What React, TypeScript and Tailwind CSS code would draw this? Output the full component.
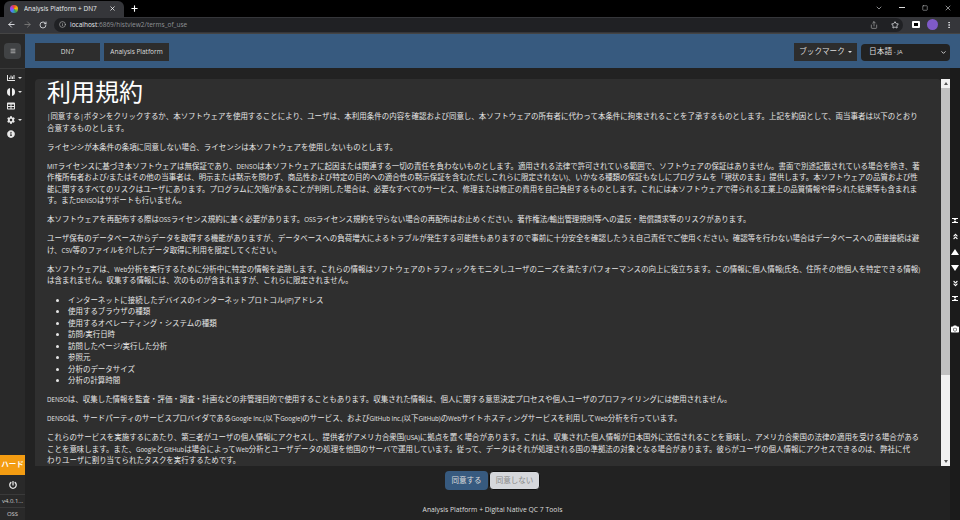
import {
  ArrowLeft,
  ArrowRight,
  ChevronDown,
  Info,
  Menu,
  MoreVertical,
  Plus,
  RotateCw,
  Share,
  Square,
  Star,
  X,
} from 'lucide-react'
import {
  FaAngleDoubleDown,
  FaAngleDoubleUp,
  FaCamera,
  FaChartBar,
  FaCog,
  FaInfoCircle,
  FaPowerOff,
  FaTable,
} from 'react-icons/fa'

const CJK = "font-['Open_Sans','Noto_Sans_CJK_JP',sans-serif]"

const INTRO = [
  '|同意する|ボタンをクリックするか、本ソフトウェアを使用することにより、ユーザは、本利用条件の内容を確認および同意し、本ソフトウェアの所有者に代わって本条件に拘束されることを了承するものとします。上記を約因として、両当事者は以下のとおり\n合意するものとします。',
  'ライセンシが本条件の条項に同意しない場合、ライセンシは本ソフトウェアを使用しないものとします。',
  'MITライセンスに基づき本ソフトウェアは無保証であり、DENSOは本ソフトウェアに起因または関連する一切の責任を負わないものとします。適用される法律で許可されている範囲で、ソフトウェアの保証はありません。書面で別途記載されている場合を除き、著\n作権所有者および/またはその他の当事者は、明示または黙示を問わず、商品性および特定の目的への適合性の黙示保証を含む(ただしこれらに限定されない)、いかなる種類の保証もなしにプログラムを「現状のまま」提供します。本ソフトウェアの品質および性\n能に関するすべてのリスクはユーザにあります。プログラムに欠陥があることが判明した場合は、必要なすべてのサービス、修理または修正の費用を自己負担するものとします。これには本ソフトウェアで得られる工業上の品質情報や得られた結果等も含まれま\nす。またDENSOはサポートも行いません。',
  '本ソフトウェアを再配布する際はOSSライセンス規約に基く必要があります。OSSライセンス規約を守らない場合の再配布はお止めください。著作権法/輸出管理規則等への違反・賠償請求等のリスクがあります。',
  'ユーザ保有のデータベースからデータを取得する機能がありますが、データベースへの負荷増大によるトラブルが発生する可能性もありますので事前に十分安全を確認したうえ自己責任でご使用ください。確認等を行わない場合はデータベースへの直接接続は避\nけ、CSV等のファイルを介したデータ取得に利用を限定してください。',
  '本ソフトウェアは、Web分析を実行するために分析中に特定の情報を追跡します。これらの情報はソフトウェアのトラフィックをモニタしユーザのニーズを満たすパフォーマンスの向上に役立ちます。この情報に個人情報(氏名、住所その他個人を特定できる情報)\nは含まれません。収集する情報には、次のものが含まれますが、これらに限定されません。',
]

const LIST_ITEMS = [
  'インターネットに接続したデバイスのインターネットプロトコル(IP)アドレス',
  '使用するブラウザの種類',
  '使用するオペレーティング・システムの種類',
  '訪問/実行日時',
  '訪問したページ/実行した分析',
  '参照元',
  '分析のデータサイズ',
  '分析の計算時間',
]

const OUTRO = [
  'DENSOは、収集した情報を監査・評価・調査・計画などの非管理目的で使用することもあります。収集された情報は、個人に関する意思決定プロセスや個人ユーザのプロファイリングには使用されません。',
  'DENSOは、サードパーティのサービスプロバイダであるGoogle Inc.(以下Google)のサービス、およびGitHub Inc.(以下GitHub)のWebサイトホスティングサービスを利用してWeb分析を行っています。',
  'これらのサービスを実施するにあたり、第三者がユーザの個人情報にアクセスし、提供者がアメリカ合衆国(USA)に拠点を置く場合があります。これは、収集された個人情報が日本国外に送信されることを意味し、アメリカ合衆国の法律の適用を受ける場合がある\nことを意味します。また、GoogleとGitHubは場合によってWeb分析とユーザデータの処理を他国のサーバで運用しています。従って、データはそれが処理される国の準拠法の対象となる場合があります。彼らがユーザの個人情報にアクセスできるのは、弊社に代\nわりユーザに割り当てられたタスクを実行するためです。',
]

// latin runs are visibly smaller than the kana in the original font mix
function MixedText({ text }: { text: string }) {
  return (
    <>
      {text.split(/([\x20-\x7e]+)/).map((part, i) =>
        i % 2 === 1 ? (
          <span key={i} className="text-[6.2px]">
            {part}
          </span>
        ) : (
          part
        ),
      )}
    </>
  )
}

function BrowserChrome() {
  return (
    <div className="flex h-[34px] shrink-0 flex-col border-b border-[#444] bg-[#35363a]">
      <div className="flex h-[17px] items-end bg-black pl-1 text-white">
        <div className="flex h-[16px] w-[120px] items-center gap-1.5 rounded-t-md bg-[#35363a] pl-[6px] pr-2 text-[6.5px]">
          <span className="h-2 w-2 shrink-0 rounded-full bg-[conic-gradient(#ea4335,#fbbc05,#34a853,#4285f4,#a142f4,#ea4335)]" />
          <span className="flex-1 truncate text-[#e8eaed]">Analysis Platform + DN7</span>
          <X size={7} strokeWidth={2.5} />
        </div>
        <Plus size={9} strokeWidth={3} className="mb-1 ml-[6px]" />
        <div className="mb-[5px] ml-auto flex items-center gap-[16.5px] pr-[8px] text-[#cfd0d2]">
          <ChevronDown size={8} />
          <span className="h-px w-[6px] bg-[#ddd]" />
          <Square size={6} strokeWidth={2} />
          <X size={8} />
        </div>
      </div>
      <div className="flex h-[17px] items-center gap-[7px] pl-[7px] pr-[7px] text-[#dfe1e5]">
        <ArrowLeft size={9} strokeWidth={2.5} />
        <ArrowRight size={9} strokeWidth={2.5} className="text-[#777]" />
        <RotateCw size={8} strokeWidth={2.5} />
        <div className="flex h-[14px] flex-1 items-center gap-1 rounded-full bg-[#202124] pl-[5px] pr-[4px] text-[6.5px]">
          <Info size={7} className="text-[#bbb]" />
          <span>
            <span className="text-[#e8eaed]">localhost</span>
            <span className="text-[#8f9296]">:6869/histview2/terms_of_use</span>
          </span>
          <Share size={8} className="ml-auto text-[#aaa]" />
          <Star size={8} strokeWidth={2.5} className="ml-[9px]" />
        </div>
        <span className="ml-[2px] h-[7px] w-[8px] rounded-[1px] border-2 border-white bg-black" />
        <span className="h-[11px] w-[11px] rounded-full bg-[#7f5ac8]" />
        <MoreVertical size={8} strokeWidth={3} />
      </div>
    </div>
  )
}

function NavIcon({ caret, children }: { caret?: boolean; children: React.ReactNode }) {
  return (
    <div className="flex h-[8px] items-center gap-[3px]">
      {children}
      {caret && <span className="h-0 w-0 border-x-[2px] border-t-[2px] border-x-transparent border-t-[#ddd]" />}
    </div>
  )
}

function Sidebar() {
  return (
    <aside className="flex w-[25px] shrink-0 flex-col items-center bg-[#292929] text-[#e8e8e8]">
      <div className="flex h-[35px] w-full items-center justify-center border-b border-[#3a3a3a]">
        <button
          type="button"
          className="flex h-4 w-[17px] items-center justify-center rounded-sm bg-[#414345] text-[#c8c8c8]"
        >
          <Menu size={6} strokeWidth={3} />
        </button>
      </div>
      <nav className="flex w-full flex-col items-start gap-[6px] pl-[7px] pt-[5px]">
        <NavIcon caret>
          <FaChartBar size={8} />
        </NavIcon>
        <NavIcon caret>
          <span className="h-2 w-2 rounded-full bg-[linear-gradient(90deg,#eee_42%,#292929_42%,#292929_58%,#eee_58%)]" />
        </NavIcon>
        <NavIcon>
          <FaTable size={8} />
        </NavIcon>
        <NavIcon caret>
          <FaCog size={8} />
        </NavIcon>
        <NavIcon>
          <FaInfoCircle size={8} />
        </NavIcon>
      </nav>
      <div
        className={`${CJK} mt-auto flex h-[20px] w-full items-center justify-center overflow-hidden bg-[#f39c12] text-[7.5px] font-bold whitespace-nowrap text-white`}
      >
        ハード
      </div>
      <div className="flex h-[20px] w-full items-center justify-center border-b border-[#3a3a3a]">
        <FaPowerOff size={8} />
      </div>
      <div className="flex h-[13px] w-full items-center justify-center border-b border-[#3a3a3a] text-[6px] whitespace-nowrap text-[#ccc]">
        v4.0.1...
      </div>
      <div className="flex h-[12px] w-full items-center justify-center text-[6px] text-[#ccc]">OSS</div>
    </aside>
  )
}

function Header() {
  return (
    <header className="flex h-[34px] shrink-0 items-center justify-between bg-[#375a7f] px-[10px] pt-[2px]">
      <div className="flex gap-1">
        <button type="button" className="h-[18px] w-[65px] bg-[#2d2d2d] text-[6.5px] text-[#ddd]">
          DN7
        </button>
        <button type="button" className="h-[18px] w-[65px] bg-[#2d2d2d] text-[6.5px] text-[#ddd]">
          Analysis Platform
        </button>
      </div>
      <div className="flex items-center gap-[4px]">
        <button
          type="button"
          className={`${CJK} flex h-[18px] w-[63px] items-center justify-center gap-[3px] bg-[#2d2d2d] text-[7.6px] text-[#ddd]`}
        >
          ブックマーク
          <span className="h-0 w-0 border-x-[2px] border-t-[2px] border-x-transparent border-t-[#ddd]" />
        </button>
        <div
          className={`${CJK} flex h-[17px] w-[89px] items-center rounded-sm bg-[#222] pl-2 pr-[3px] text-[7.7px] text-[#ddd]`}
        >
          日本語<span className="text-[6px]">&nbsp;- JA</span>
          <ChevronDown size={7} strokeWidth={3} className="ml-auto" />
        </div>
      </div>
    </header>
  )
}

function RailSlot({ children }: { children: React.ReactNode }) {
  return <div className="flex h-[15.7px] items-center justify-center">{children}</div>
}

function RailEdgeIcon() {
  return (
    <svg width="6" height="5" viewBox="0 0 6 5" fill="currentColor">
      <rect width="6" height="1" />
      <rect y="4" width="6" height="1" />
      <path d="M1.5 1h3L3 2.5zM1.5 4h3L3 2.5z" />
    </svg>
  )
}

function RightRail() {
  return (
    <div className="flex w-[10px] shrink-0 flex-col items-center bg-[#1b1b1b] pt-[144.6px] text-white">
      <RailSlot>
        <RailEdgeIcon />
      </RailSlot>
      <RailSlot>
        <FaAngleDoubleUp size={7} />
      </RailSlot>
      <RailSlot>
        <span className="h-0 w-0 border-x-[4px] border-b-[6px] border-x-transparent border-b-white" />
      </RailSlot>
      <RailSlot>
        <span className="h-0 w-0 border-x-[4px] border-t-[6px] border-x-transparent border-t-white" />
      </RailSlot>
      <RailSlot>
        <FaAngleDoubleDown size={7} />
      </RailSlot>
      <RailSlot>
        <RailEdgeIcon />
      </RailSlot>
      <div className="mt-[14px]">
        <RailSlot>
          <FaCamera size={8} />
        </RailSlot>
      </div>
    </div>
  )
}

function Scrollbar() {
  return (
    <div className="flex w-[9px] shrink-0 flex-col bg-[#f1f1f1]">
      <div className="flex h-[9px] items-center justify-center">
        <span className="h-0 w-0 border-x-[2px] border-b-[3px] border-x-transparent border-b-[#555]" />
      </div>
      <div className="h-[287px] bg-[#c1c1c1]" />
      <div className="mt-auto flex h-[9px] items-center justify-center">
        <span className="h-0 w-0 border-x-[2px] border-t-[3px] border-x-transparent border-t-[#555]" />
      </div>
    </div>
  )
}

function Terms() {
  return (
    <div
      className={`${CJK} flex h-[387px] min-w-0 flex-1 flex-col rounded-t-sm bg-[#2f2f2f] pl-3 text-[7.47px] leading-[11.5px] whitespace-pre text-[#e6e6e6]`}
    >
      <h1 className="mb-[6px] text-[24px] leading-[26px] text-white">利用規約</h1>
      <div className="flex flex-col gap-[7.6px]">
        {INTRO.map((text) => (
          <p key={text}>
            <MixedText text={text} />
          </p>
        ))}
        <ul className="list-disc pl-[21px]">
          {LIST_ITEMS.map((item) => (
            <li key={item}>
              <MixedText text={item} />
            </li>
          ))}
        </ul>
        {OUTRO.map((text) => (
          <p key={text}>
            <MixedText text={text} />
          </p>
        ))}
      </div>
    </div>
  )
}

export default function App() {
  return (
    <div className="flex h-[520px] w-[960px] flex-col overflow-hidden bg-[#222] font-['Open_Sans',sans-serif]">
      <BrowserChrome />
      <div className="flex min-h-0 flex-1">
        <Sidebar />
        <main className="flex min-w-0 flex-1 flex-col">
          <Header />
          <div className="flex min-h-0 flex-1">
            <div className="flex min-w-0 flex-1 flex-col pl-[10px]">
              <div className="mt-[11px] flex">
                <Terms />
                <Scrollbar />
              </div>
              <div className={`${CJK} mt-[5px] flex justify-center gap-px`}>
                <button
                  type="button"
                  className="h-[19px] w-[43px] rounded-sm bg-[#375a7f] text-[7.5px] text-[#ddd]"
                >
                  同意する
                </button>
                <button
                  type="button"
                  className="h-[19px] w-[51px] rounded-sm border border-[#111] bg-[#d5d7db] text-[7.5px] text-[#888]"
                >
                  同意しない
                </button>
              </div>
              <p className="mt-[15px] text-center text-[6.8px] text-[#ddd]">
                Analysis Platform + Digital Native QC 7 Tools
              </p>
            </div>
            <RightRail />
          </div>
        </main>
      </div>
    </div>
  )
}
